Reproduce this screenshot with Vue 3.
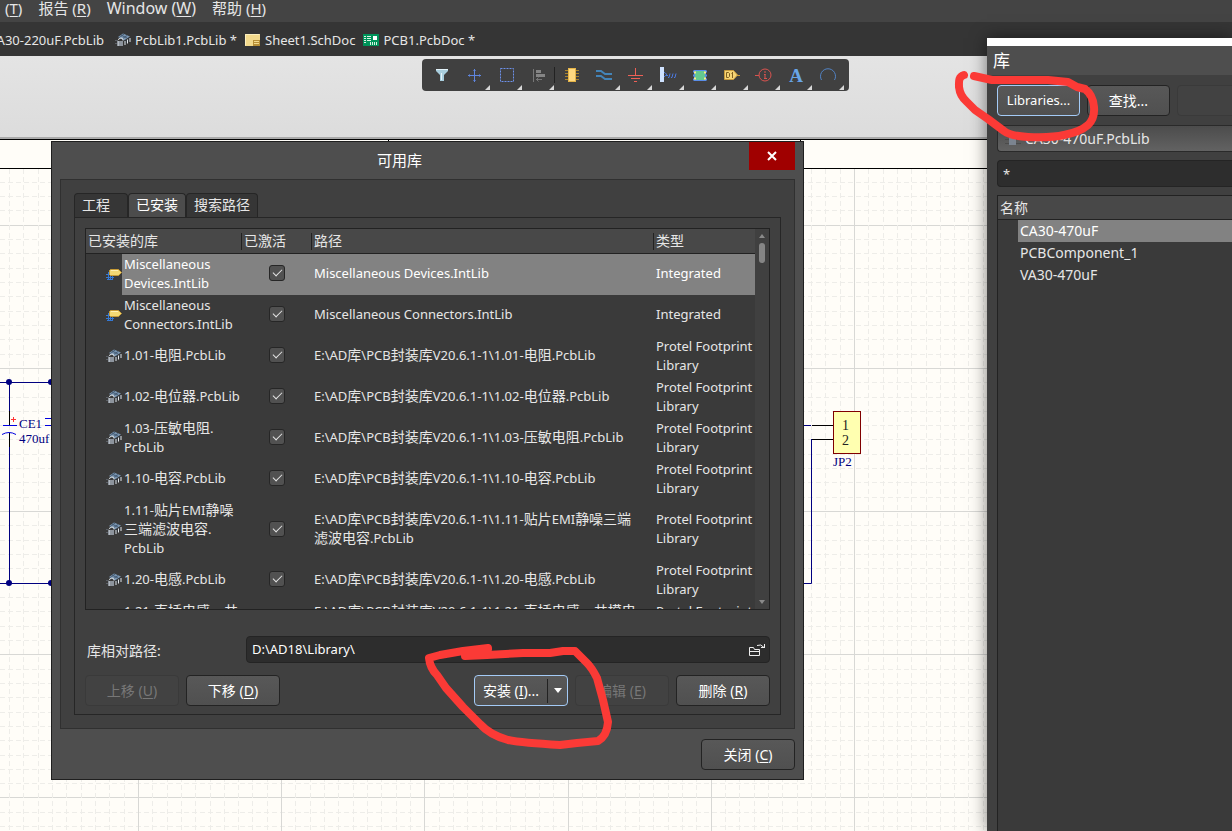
<script setup>
import { ref } from 'vue'

const menus = [
  { label: '', key: 'T' },
  { label: '报告', key: 'R' },
  { label: 'Window', key: 'W' },
  { label: '帮助', key: 'H' },
]

const root = 'E:\\AD库\\PCB封装库V20.6.1-1\\'
const footprint = 'Protel Footprint\nLibrary'
const libraries = ref([
  { icon: 'int', name: 'Miscellaneous\nDevices.IntLib', path: 'Miscellaneous Devices.IntLib', type: 'Integrated', on: true },
  { icon: 'int', name: 'Miscellaneous\nConnectors.IntLib', path: 'Miscellaneous Connectors.IntLib', type: 'Integrated', on: true },
  { icon: 'pcb', name: '1.01-电阻.PcbLib', path: root + '1.01-电阻.PcbLib', type: footprint, on: true },
  { icon: 'pcb', name: '1.02-电位器.PcbLib', path: root + '1.02-电位器.PcbLib', type: footprint, on: true },
  { icon: 'pcb', name: '1.03-压敏电阻.\nPcbLib', path: root + '1.03-压敏电阻.PcbLib', type: footprint, on: true },
  { icon: 'pcb', name: '1.10-电容.PcbLib', path: root + '1.10-电容.PcbLib', type: footprint, on: true },
  { icon: 'pcb', name: '1.11-贴片EMI静噪\n三端滤波电容.\nPcbLib', path: root + '1.11-贴片EMI静噪三端\n滤波电容.PcbLib', type: footprint, on: true },
  { icon: 'pcb', name: '1.20-电感.PcbLib', path: root + '1.20-电感.PcbLib', type: footprint, on: true },
  { icon: 'pcb', name: '1.21-直插电感、共\n模电感.PcbLib', path: root + '1.21-直插电感、共模电\n感.PcbLib', type: footprint, on: true },
])
const selected = ref(0)
const relPath = ref('D:\\AD18\\Library\\')
const filter = ref('*')
const components = ['CA30-470uF', 'PCBComponent_1', 'VA30-470uF']

const tools = [
  { id: 'filter', name: 'Filter', more: false },
  { id: 'move', name: 'Move', more: true },
  { id: 'select', name: 'Select', more: true },
  { id: 'align', name: 'Align', more: true },
  { id: 'part', name: 'Part', more: false },
  { id: 'wire', name: 'Wire', more: true },
  { id: 'ground', name: 'Ground', more: true },
  { id: 'harness', name: 'Harness', more: true },
  { id: 'sheet', name: 'Sheet symbol', more: true },
  { id: 'port', name: 'Port', more: true },
  { id: 'info', name: 'Directive', more: true },
  { id: 'text', name: 'Text', more: true },
  { id: 'arc', name: 'Arc', more: true },
]

// Splits a label into Latin and Chinese runs, which are set in different sizes.
const runs = (text) =>
  text
    .split(/([\u3000-\u9fff]+)/)
    .filter(Boolean)
    .map((t) => ({ text: t, cjk: /[\u3000-\u9fff]/.test(t) }))

const pitch = 143.2
const lines = (start, count) =>
  Array.from({ length: count }, (_, i) => ({ at: Math.floor(start + (i * pitch) / 10) + 0.5, major: i % 10 === 0 }))
const gridX = lines(-4.8, 200)
const gridY = lines(82, 140).filter((l) => l.at > 169)
</script>

<template>
  <div class="app">
    <nav class="menubar">
      <button v-for="m in menus" :key="m.key" type="button" class="menu">
        <span v-for="p in runs(m.label + ' ')" :key="p.text" :class="{ cjk: p.cjk }">{{ p.text }}</span>(<u>{{ m.key }}</u>)
      </button>
    </nav>

    <div class="doctabs">
      <button type="button" class="doc cut"><span>A30-220uF.PcbLib</span></button>
      <button type="button" class="doc">
        <svg width="16" height="14"><use href="#ico-pcb" /></svg><span>PcbLib1.PcbLib *</span>
      </button>
      <button type="button" class="doc">
        <svg width="16" height="14">
          <rect x="0" y="1" width="15" height="12" fill="#f2d98c" />
          <path d="M.5 12.500V1.500H14.500" fill="none" stroke="#fbeebf" />
          <rect x="8" y="7" width="7" height="6" fill="#b78e35" />
          <path d="M9 8.500h5M9 10.500h5" stroke="#f2d98c" />
        </svg>
        <span>Sheet1.SchDoc</span>
      </button>
      <button type="button" class="doc">
        <svg width="16" height="14">
          <rect x="0" y="1" width="16" height="12" fill="#00935a" />
          <path d="M1 3.500h2M1 5.500h2M1 7.500h2M1 9.500h2M4 3.500h4M4 5.500h4M4 7.500h4" stroke="#d8f2e2" />
          <rect x="10" y="3" width="4" height="4" fill="#fff" />
          <path d="M7.500 9v3M9.500 9v3M11.500 9v3M13.500 9v3" stroke="#d8f2e2" />
        </svg>
        <span>PCB1.PcbDoc *</span>
      </button>
    </div>

    <div class="strip">
      <div class="toolbar">
        <template v-for="(t, i) in tools" :key="t.id">
          <i v-if="i === 4" class="divider"></i>
          <button type="button" class="tool" :class="{ more: t.more }" :aria-label="t.name">
            <svg width="18" height="18" fill="none">
              <g v-if="t.id === 'filter'">
                <path d="M3 3h12v2l-4 4v6H7V9L3 5z" fill="#a9cede" />
                <path d="M3 3.500h12M8.500 7v7" stroke="#e3f3fa" />
              </g>
              <g v-else-if="t.id === 'move'" stroke="#5f86e0">
                <path d="M9.500 3v13M3 9.500h13" />
                <path d="M8 4.500h3M8 14.500h3M4.500 8v3M14.500 8v3" stroke-opacity=".6" />
              </g>
              <rect v-else-if="t.id === 'select'" x="3.500" y="2.500" width="13" height="13" stroke="#6d91ea" stroke-dasharray="2 1" />
              <g v-else-if="t.id === 'align'">
                <path d="M4.500 3v13" stroke="#777" />
                <rect x="7" y="4" width="5" height="3" fill="#858585" />
                <rect x="7" y="8" width="9" height="3" fill="#858585" />
                <path d="M7 13.500h6M9.500 11.500l-2 2 2 2" stroke="#777" />
              </g>
              <g v-else-if="t.id === 'part'">
                <path d="M2 4.500h14M2 7.500h14M2 10.500h14M2 13.500h14" stroke="#a8842e" />
                <rect x="5.500" y="2.500" width="7" height="13" fill="#ffd980" stroke="#e5b447" />
              </g>
              <g v-else-if="t.id === 'wire'" stroke="#4384b8" stroke-width="2">
                <path d="M1 5h5l4 3h7M1 10h5l4 3h7" />
              </g>
              <g v-else-if="t.id === 'ground'" stroke="#ee6056">
                <path d="M8.500 2v8M1 9.500h15M4 12.500h9M7 15.500h3" />
              </g>
              <g v-else-if="t.id === 'harness'">
                <rect x="1" y="1" width="4" height="15" fill="#cfe2ff" />
                <path d="M5 6q2 2 3 2.500q-1 .5-3 2.500M7 9.500h2" stroke="#4b78e0" />
                <path d="M9 11.500h1l1-4M12 11.500h1l1-4M15 11.500h1l1-4" stroke="#4b78e0" />
              </g>
              <g v-else-if="t.id === 'sheet'">
                <path d="M2 5.500h14M2 9.500h14M2 13.500h14" stroke="#5a8de8" stroke-width="2" />
                <rect x="3.500" y="4.500" width="11" height="10" fill="#65c98e" stroke="#5a8de8" />
                <path d="M3 6.500h2M3 12.500h2M13 6.500h2M13 12.500h2" stroke="#ffe98a" stroke-width="2" />
              </g>
              <g v-else-if="t.id === 'port'">
                <path d="M1.500 4.500h9l4 4.500-4 4.500h-9z" fill="#f6d576" stroke="#c99c3c" />
                <path d="M14 9.500h3" stroke="#c99c3c" />
                <path d="M3.500 6.500v5M3.500 6.500h2l1 1v3l-1 1h-2M9.500 6v6M8.500 7.500h1" stroke="#80601f" />
              </g>
              <g v-else-if="t.id === 'info'" stroke="#d9534f">
                <circle cx="10" cy="9" r="6" />
                <path d="M0 9.500h4M10 5v2M9 8.500h1.500M10 8v4M9 12.500h3" />
              </g>
              <text v-else-if="t.id === 'text'" x="9" y="16" text-anchor="middle" class="letter">A</text>
              <path v-else d="M2.500 14a7.500 7.500 0 1 1 13 0" stroke="#5283c4" />
            </svg>
          </button>
        </template>
      </div>
    </div>

    <svg class="sheet" fill="none">
      <g transform="translate(0,-139)">
        <g v-for="l in gridY" :key="'y' + l.at">
          <line x1="0" x2="3000" :y1="l.at" :y2="l.at" :class="l.major ? 'major' : 'minor'" />
        </g>
        <g v-for="l in gridX" :key="'x' + l.at">
          <line y1="169" y2="2200" :x1="l.at" :x2="l.at" :class="l.major ? 'major' : 'minor'" />
        </g>
        <path d="M0 139.500H3000M0 168.500H3000M388.500 139v4M800.500 139v4" stroke="#000" />
        <g stroke="#000080">
          <path d="M0 382.500H60M9.500 382v30M9.500 447v136M0 583.500H60" />
          <path d="M800 425.500h11M811.500 439v144.500H800" />
        </g>
        <g fill="#000080">
          <circle cx="9" cy="382" r="3" /><circle cx="51" cy="382" r="3" />
          <circle cx="9" cy="583" r="3" /><circle cx="51" cy="583" r="3" />
        </g>
        <path d="M9.500 411v14M9.500 433v14M812 425.500h21M812 439.500h21" stroke="#000" />
        <path d="M3 425.500h14M2 434.500q7-4 14 0M45 418.500h8M45 425.500h8" stroke="#0000e0" />
        <path d="M13.500 417v5M11 419.500h5" stroke="#f33" />
        <rect x="833.500" y="411.500" width="27" height="42" fill="#ffffb0" stroke="#800000" />
        <g class="net">
          <text x="19" y="428">CE1</text>
          <text x="19" y="443">470uf</text>
          <text x="833" y="466">JP2</text>
        </g>
        <g class="pin">
          <text x="842" y="430">1</text>
          <text x="842" y="445">2</text>
        </g>
      </g>
    </svg>

    <section class="dialog" role="dialog" aria-labelledby="dlg-title">
      <header class="titlebar">
        <h1 id="dlg-title">可用库</h1>
        <button type="button" class="close" aria-label="Close">
          <svg width="10" height="10"><path d="M1 1l8 8M9 1L1 9" stroke="#fff" stroke-width="2" /></svg>
        </button>
      </header>

      <div class="frame">
        <div class="tabs" role="tablist">
          <button type="button" role="tab" class="tab first">工程</button>
          <button type="button" role="tab" class="tab active" aria-selected="true">已安装</button>
          <button type="button" role="tab" class="tab">搜索路径</button>
        </div>
        <div class="page">
          <div class="listbox">
            <table>
              <colgroup>
                <col class="c-name" /><col class="c-on" /><col /><col class="c-type" />
              </colgroup>
              <thead>
                <tr><th>已安装的库</th><th>已激活</th><th>路径</th><th>类型</th></tr>
              </thead>
              <tbody>
                <tr v-for="(lib, i) in libraries" :key="lib.name" :class="{ sel: i === selected }" @click="selected = i">
                  <td>
                    <div class="namecell">
                      <svg width="16" height="14"><use :href="'#ico-' + lib.icon" /></svg>
                      <div><span v-for="(p, n) in runs(lib.name)" :key="n" :class="{ cjk: p.cjk }">{{ p.text }}</span></div>
                    </div>
                  </td>
                  <td class="mid"><input v-model="lib.on" type="checkbox" :aria-label="lib.path" /></td>
                  <td><span v-for="(p, n) in runs(lib.path)" :key="n" :class="{ cjk: p.cjk }">{{ p.text }}</span></td>
                  <td>{{ lib.type }}</td>
                </tr>
              </tbody>
            </table>
            <div class="scroll">
              <svg width="6" height="4"><path d="M0 4L3 0l3 4z" fill="#8a8a8a" /></svg>
              <i class="thumb"></i>
              <svg width="6" height="4"><path d="M0 0l3 4 3-4z" fill="#8a8a8a" /></svg>
            </div>
          </div>

          <div class="pathrow">
            <label for="rel">库相对路径:</label>
            <div class="field">
              <input id="rel" v-model="relPath" type="text" />
              <button type="button" aria-label="Browse">
                <svg width="18" height="14" fill="none" stroke="#eee">
                  <path d="M1.500 12.500v-8h4l1 2h5v6zM2 8.500h9" />
                  <path d="M9 2.500q4-2 7 2M16.500 1v4M13 4.500h4" />
                </svg>
              </button>
            </div>
          </div>

          <div class="actions">
            <button type="button" class="btn" disabled>上移 (<u>U</u>)</button>
            <button type="button" class="btn">下移 (<u>D</u>)</button>
            <span class="spacer"></span>
            <button type="button" class="btn split focus">
              <span>安装 (<u>I</u>)...</span>
              <i class="drop"></i>
            </button>
            <button type="button" class="btn" disabled>编辑 (<u>E</u>)</button>
            <button type="button" class="btn">删除 (<u>R</u>)</button>
          </div>
        </div>
      </div>

      <footer><button type="button" class="btn">关闭 (<u>C</u>)</button></footer>
    </section>

    <aside class="panel">
      <h2>库</h2>
      <div class="body">
        <div class="row">
          <button type="button" class="btn focus">Libraries...</button>
          <button type="button" class="btn">查找...</button>
          <button type="button" class="btn" disabled aria-label="Place"></button>
        </div>
        <button type="button" class="combo">
          <svg width="16" height="14">
            <path d="M0 3.500h16M0 7.500h16M0 11.500h16" stroke="#4b4b4b" />
            <rect x="4" y="1" width="7" height="12" fill="#7b8490" />
          </svg>
          <span>CA30-470uF.PcbLib</span>
        </button>
        <input v-model="filter" type="text" class="mask" aria-label="Filter" />
        <div class="names">
          <h3>名称</h3>
          <ul>
            <li v-for="(c, i) in components" :key="c" :class="{ sel: i === 0 }">{{ c }}</li>
          </ul>
        </div>
      </div>
    </aside>

    <svg class="marks" fill="none">
      <path d="M964 75C958 77 959 82 959 87Q960 96 967 102L975 110L988 119L1004 131Q1010 136 1028 137Q1052 138 1064 135Q1080 132 1088 125Q1095 118 1094 107Q1093 95 1085 89L1077 87L1068 82L1048 80H992L974 76" />
      <path d="M488 648L463 651L440 655L429 658Q430 668 437 675L446 688L463 707L480 724Q490 735 508 740Q522 743 560 745L577 743L598 741Q607 736 608 722L603 700L597 678Q592 668 587 663L575 651H563L550 653H523L487 655L465 656L488 649" />
    </svg>

    <svg class="defs" width="0" height="0">
      <symbol id="ico-pcb" viewBox="0 0 16 14">
        <path d="M0 7.500h3M0 10.500h3" stroke="#5c6066" />
        <path d="M3 4l5-3.500 7 3-6 4z" fill="#7894b0" />
        <path d="M6 2l6 3M9 1L4 5M12 2.500L7 6" stroke="#465c74" />
        <path d="M15 4v4l-6 4V8z" fill="#33383e" />
        <path d="M10 8v4M12.500 6.500v4M15 5v4" stroke="#e2e6ea" />
        <path d="M3.500 7q0-2 2.500-2t2 2.500" stroke="#dfe3e6" fill="none" />
        <rect x="2" y="8" width="6" height="5" fill="#8d949d" />
        <path d="M3.500 8v5" stroke="#b4bac1" />
      </symbol>
      <symbol id="ico-int" viewBox="0 0 16 14">
        <path d="M0 7.500h8M0 10.500h8M1 12.500h6M2.500 5v8M4.500 5v8M6.500 5v8" stroke="#3478d4" />
        <path d="M4.500 2.500h8l3 3-3 3h-8l-1-1v-4z" fill="#f3d873" stroke="#c79b35" />
        <path d="M5 3.500h7" stroke="#fff1b4" />
      </symbol>
    </svg>
  </div>
</template>

<style>
html,
body {
  height: 100%;
  overflow: hidden;
}
#app {
  height: 100%;
}
</style>

<style scoped>
.app {
  position: relative;
  display: flex;
  flex-direction: column;
  height: 100vh;
  overflow: hidden;
  background: #fffdf8;
  color: #e6e6e6;
  font: 13px/19px "Noto Sans", "Noto Sans CJK SC", sans-serif;
}
.app * {
  box-sizing: border-box;
}
button,
input {
  margin: 0;
  padding: 0;
  border: 0;
  background: none;
  color: inherit;
  font: inherit;
}
svg {
  flex: none;
}
u {
  text-underline-offset: 2px;
}
h1,
h2,
h3,
ul {
  margin: 0;
  padding: 0;
  font-weight: 400;
  list-style: none;
}
.cjk {
  font-size: 14px;
  line-height: 1;
}

.menubar {
  display: flex;
  align-items: center;
  gap: 16px;
  height: 22px;
  padding: 0 0 6px 5px;
  background: #444;
  font-size: 15px;
  white-space: nowrap;
}
.menu {
  line-height: 16px;
}
.menu .cjk {
  font-size: 15px;
}
.menu:nth-child(3) {
  font-size: 16px;
}
.menu span {
  white-space: pre;
}
.menu:first-child span {
  display: none;
}
.doctabs {
  display: flex;
  align-items: center;
  gap: 8px;
  height: 34px;
  padding-top: 2px;
  background: #353535;
  white-space: nowrap;
}
.doc {
  display: flex;
  align-items: center;
  gap: 4px;
}
.doc.cut {
  width: 107px;
  padding-right: 3px;
  justify-content: flex-end;
}
.strip {
  flex: none;
  height: 83px;
  padding: 3px 0 0 422px;
  border-bottom: 2px solid #a9a9a9;
  background: linear-gradient(#e4e4e4, #dcdcdc);
}
.toolbar {
  display: flex;
  width: max-content;
  height: 32px;
  padding: 0 5px 0 4px;
  border-radius: 4px;
  background: #404040;
}
.divider {
  width: 2px;
  margin: 8px 0;
  border-left: 1px solid #222;
}
.tool {
  position: relative;
  display: flex;
  align-items: center;
  justify-content: center;
  width: 32px;
}
.more::after {
  content: "";
  position: absolute;
  right: 0;
  bottom: 1px;
  border-left: 5px solid transparent;
  border-bottom: 5px solid #d8d8d8;
}
.letter {
  fill: #68a5e8;
  font: bold 19px "Liberation Serif", serif;
}
.sheet {
  flex: 1;
  width: 100%;
  min-height: 0;
}
.minor {
  stroke: #eeede9;
  stroke-dasharray: 5 3;
}
.major {
  stroke: #d8d8d5;
}
.net,
.pin {
  font: 14px "Liberation Serif", serif;
  fill: #000080;
}
.net {
  font-size: 13px;
}
.pin {
  fill: #222;
}

.dialog {
  position: absolute;
  left: 51px;
  top: 141px;
  width: 753px;
  padding: 0 8px 9px;
  border: 1px solid #1f1f1f;
  background: #4e4e4e;
}
.titlebar {
  display: flex;
  height: 37px;
}
.titlebar h1 {
  flex: 1;
  padding: 8px 10px 0 0;
  color: #fff;
  font-size: 15px;
  line-height: 20px;
  text-align: center;
}
.close {
  display: flex;
  align-items: center;
  justify-content: center;
  width: 46px;
  height: 28px;
  background: #a00000;
}
.frame {
  padding: 13px;
  border: 1px solid #303030;
  background: #404040;
}
.tabs {
  display: flex;
  color: #e6e6e6;
  font-size: 14px;
}
.tab {
  height: 24px;
  padding: 0 7px 2px;
  border: 1px solid #262626;
  border-bottom: 0;
  border-radius: 4px 4px 0 0;
  background: #363636;
}
.tab.first {
  padding-right: 17px;
}
.tab.active {
  background: #4c4c4c;
  color: #fff;
}
.page {
  padding: 10px 10px 8px;
  border: 1px solid #262626;
}
.listbox {
  display: flex;
  height: 382px;
  overflow: hidden;
  border: 1px solid #222;
  background: #3a3a3a;
}
table {
  flex: 1;
  align-self: flex-start;
  table-layout: fixed;
  border-collapse: collapse;
}
.c-name {
  width: 155px;
}
.c-on {
  width: 70px;
}
.c-type {
  width: 102px;
}
th {
  position: relative;
  height: 24px;
  padding: 0 3px;
  border-bottom: 1px solid #222;
  background: #484848;
  font-size: 14px;
  font-weight: 400;
  text-align: left;
}
th:first-child {
  padding-left: 2px;
}
th + th::before {
  content: "";
  position: absolute;
  left: 0;
  top: 4px;
  bottom: 3px;
  border-left: 1px solid #222;
}
td {
  padding: 1px 0 2px 3px;
  white-space: pre;
}
tbody tr {
  height: 41px;
}
td:first-child {
  padding-left: 20px;
}
.sel {
  color: #fff;
}
.sel td {
  background: #828282;
}
.sel td:first-child {
  background: linear-gradient(90deg, #3a3a3a 36px, #828282 36px);
}
.namecell {
  display: flex;
  align-items: center;
  gap: 2px;
}
td.mid {
  padding: 0 0 2px 28px;
  line-height: 0;
}
td input {
  display: inline-flex;
  align-items: center;
  justify-content: center;
  width: 16px;
  height: 16px;
  appearance: none;
  border: 1px solid #262626;
  border-radius: 3px;
  background: #515151;
}
td input:checked::before {
  content: "";
  width: 8px;
  height: 4px;
  margin-bottom: 3px;
  border: solid #e4e4e4;
  border-width: 0 0 1px 1px;
  transform: rotate(-45deg);
}
.scroll {
  display: flex;
  flex-direction: column;
  align-items: center;
  width: 14px;
  padding: 5px 0;
  background: #404040;
}
.thumb {
  width: 6px;
  height: 20px;
  margin: 5px 0 auto;
  border-radius: 3px;
  background: #858585;
}
.pathrow {
  display: flex;
  align-items: center;
  margin-top: 26px;
}
.pathrow label {
  width: 161px;
  padding: 2px 0 0 2px;
  font-size: 14px;
}
.field {
  display: flex;
  flex: 1;
  align-items: center;
  height: 27px;
  padding: 0 3px 0 5px;
  border: 1px solid #242424;
  border-radius: 4px;
  background: #2d2d2d;
  color: #fff;
}
.field input {
  flex: 1;
  min-width: 0;
}
.field button {
  line-height: 0;
}
.actions {
  display: flex;
  gap: 7px;
  margin-top: 12px;
}
.spacer {
  flex: 1;
}
.btn {
  width: 94px;
  height: 31px;
  border: 1px solid #232323;
  border-radius: 4px;
  background: linear-gradient(#585858, #505050);
  color: #fff;
  font-size: 14px;
}
.btn:disabled {
  border-color: #3a3a3a;
  background: #424242;
  color: #777;
}
.btn.focus {
  border-color: #a4cbf7;
}
.split {
  display: flex;
  align-items: center;
}
.split span {
  flex: 1;
}
.drop {
  display: flex;
  align-items: center;
  justify-content: center;
  width: 20px;
  height: 24px;
  border-left: 1px solid #222;
}
.drop::before {
  content: "";
  border: 4px solid transparent;
  border-top: 5px solid #fff;
  border-bottom: 0;
}
footer {
  display: flex;
  justify-content: flex-end;
  padding-top: 10px;
}

.panel {
  position: absolute;
  top: 38px;
  right: 0;
  bottom: 0;
  display: flex;
  flex-direction: column;
  width: 245px;
  border-top: 8px solid #fff;
  background: #404040;
  box-shadow: 0 0 16px rgba(0, 0, 0, 0.5);
}
.panel h2 {
  padding: 5px 6px 4px;
  background: #4e4e4e;
  color: #fff;
  font-size: 17px;
  line-height: 20px;
}
.body {
  display: flex;
  flex: 1;
  flex-direction: column;
  gap: 8px;
  padding: 10px 0 0 10px;
}
.row {
  display: flex;
  gap: 7px;
  overflow: hidden;
  height: 32px;
}
.row .btn {
  flex: none;
  width: 83px;
  font-size: 13px;
}
.row .btn + .btn {
  font-size: 14px;
}
.combo {
  display: flex;
  align-items: center;
  gap: 4px;
  height: 27px;
  padding-left: 7px;
  border: 1px solid #2a2a2a;
  border-right: 0;
  border-radius: 4px 0 0 4px;
  background: linear-gradient(#4c4c4c, #626262);
  font-size: 14px;
}
.mask {
  height: 27px;
  padding-left: 5px;
  border: 1px solid #242424;
  border-right: 0;
  border-radius: 4px 0 0 4px;
  background: #2d2d2d;
}
.names {
  flex: 1;
  border: solid #222;
  border-width: 1px 0 0 1px;
  background: #3a3a3a;
  font-size: 14px;
}
.names h3 {
  height: 24px;
  padding: 2px;
  border-bottom: 1px solid #222;
  background: #484848;
  font-size: 14px;
}
li {
  margin-left: 20px;
  padding-left: 2px;
  line-height: 22px;
}
li.sel {
  background: #828282;
}
.marks {
  position: absolute;
  inset: 0;
  width: 100%;
  height: 100%;
  pointer-events: none;
  stroke: #fb3a36;
  stroke-width: 8px;
  stroke-linecap: round;
  stroke-linejoin: round;
}
.defs {
  position: absolute;
}
</style>
